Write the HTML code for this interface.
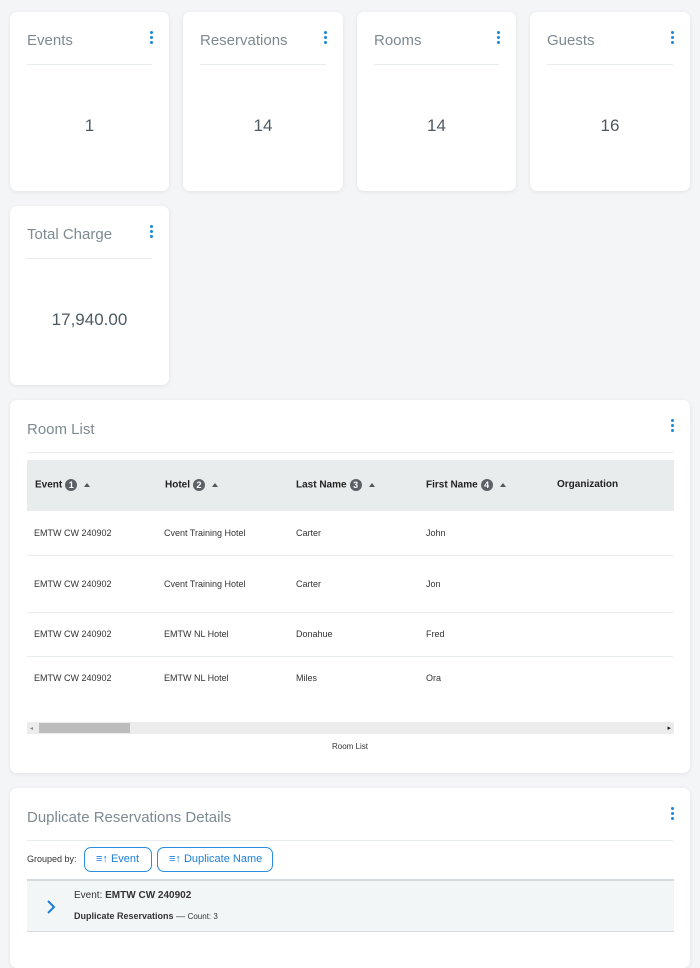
<!DOCTYPE html>
<html><head><meta charset="utf-8"><style>
*{box-sizing:border-box;margin:0;padding:0}
body{width:700px;height:951px;background:#f4f5f6;font-family:"Liberation Sans",sans-serif;position:relative;overflow:hidden;color:#333}
.card{position:absolute;background:#fff;border-radius:7px;box-shadow:0 1px 4px rgba(0,0,0,.08)}
.t{position:absolute;left:17px;top:20px;font-size:15px;color:#7d8a92}
.ln{position:absolute;left:17px;right:17px;height:1px;background:#e8ebed}
.dots{position:absolute;width:3px}
.dots i{display:block;width:3px;height:3px;border-radius:50%;background:#1a8ad6;margin-bottom:2px}
.n{position:absolute;left:0;right:0;text-align:center;font-size:17px;color:#4d5a63}
.abs{position:absolute;font-size:9px;color:#333}
.th{position:absolute;top:19px;font-size:10px;font-weight:bold;color:#222}
.b{display:inline-block;width:12px;height:12px;border-radius:50%;background:#5b6166;color:#fff;font-size:9px;text-align:center;line-height:12px;vertical-align:middle;margin:0 3px}
.ar{display:inline-block;width:0;height:0;border-left:3px solid transparent;border-right:3px solid transparent;border-bottom:4px solid #555;vertical-align:middle;margin-left:4px}
.btn{position:absolute;top:59px;height:25px;border:1px solid #2a8de0;border-radius:7px;color:#1a7fd8;font-size:11px;line-height:23px;padding-left:11px}
</style></head><body>
<div class="card" style="left:10px;top:12px;width:159px;height:179px"><div class="t">Events</div><div class="dots" style="left:140px;top:19px"><i></i><i></i><i></i></div><div class="ln" style="top:52px"></div><div class="n" style="top:104px">1</div></div>
<div class="card" style="left:183px;top:12px;width:160px;height:179px"><div class="t">Reservations</div><div class="dots" style="left:141px;top:19px"><i></i><i></i><i></i></div><div class="ln" style="top:52px"></div><div class="n" style="top:104px">14</div></div>
<div class="card" style="left:357px;top:12px;width:159px;height:179px"><div class="t">Rooms</div><div class="dots" style="left:140px;top:19px"><i></i><i></i><i></i></div><div class="ln" style="top:52px"></div><div class="n" style="top:104px">14</div></div>
<div class="card" style="left:530px;top:12px;width:160px;height:179px"><div class="t">Guests</div><div class="dots" style="left:141px;top:19px"><i></i><i></i><i></i></div><div class="ln" style="top:52px"></div><div class="n" style="top:104px">16</div></div>
<div class="card" style="left:10px;top:206px;width:159px;height:179px"><div class="t">Total Charge</div><div class="dots" style="left:140px;top:19px"><i></i><i></i><i></i></div><div class="ln" style="top:52px"></div><div class="n" style="top:104px">17,940.00</div></div>

<div class="card" style="left:10px;top:400px;width:680px;height:373px">
<div class="t" style="top:21px">Room List</div><div class="dots" style="left:661px;top:19px"><i></i><i></i><i></i></div><div class="ln" style="top:52px"></div>
<div style="position:absolute;left:17px;top:60px;width:647px;height:51px;background:#e9ecec">
<div class="th" style="left:8px">Event<span class="b">1</span><span class="ar"></span></div>
<div class="th" style="left:138px">Hotel<span class="b">2</span><span class="ar"></span></div>
<div class="th" style="left:269px">Last Name<span class="b">3</span><span class="ar"></span></div>
<div class="th" style="left:399px">First Name<span class="b">4</span><span class="ar"></span></div>
<div class="th" style="left:530px">Organization</div>
</div>
<div class="abs" style="left:24px;top:128px">EMTW CW 240902</div><div class="abs" style="left:154px;top:128px">Cvent Training Hotel</div><div class="abs" style="left:286px;top:128px">Carter</div><div class="abs" style="left:416px;top:128px">John</div>
<div class="ln" style="top:155px"></div>
<div class="abs" style="left:24px;top:179px">EMTW CW 240902</div><div class="abs" style="left:154px;top:179px">Cvent Training Hotel</div><div class="abs" style="left:286px;top:179px">Carter</div><div class="abs" style="left:416px;top:179px">Jon</div>
<div class="ln" style="top:212px"></div>
<div class="abs" style="left:24px;top:229px">EMTW CW 240902</div><div class="abs" style="left:154px;top:229px">EMTW NL Hotel</div><div class="abs" style="left:286px;top:229px">Donahue</div><div class="abs" style="left:416px;top:229px">Fred</div>
<div class="ln" style="top:256px"></div>
<div class="abs" style="left:24px;top:273px">EMTW CW 240902</div><div class="abs" style="left:154px;top:273px">EMTW NL Hotel</div><div class="abs" style="left:286px;top:273px">Miles</div><div class="abs" style="left:416px;top:273px">Ora</div>
<div style="position:absolute;left:17px;top:322px;width:647px;height:12px;background:#ececec"><div style="position:absolute;left:12px;top:1px;width:91px;height:10px;background:#bdbdbd"></div><div style="position:absolute;left:3px;top:3px;font-size:6px;color:#888">◂</div><div style="position:absolute;right:3px;top:2px;font-size:7px;color:#222">▸</div></div>
<div class="abs" style="left:0;right:0;text-align:center;top:342px;font-size:8px">Room List</div>
</div>

<div class="card" style="left:10px;top:788px;width:680px;height:180px">
<div class="t" style="top:21px">Duplicate Reservations Details</div><div class="dots" style="left:661px;top:19px"><i></i><i></i><i></i></div><div class="ln" style="top:52px"></div>
<div class="abs" style="left:17px;top:66px;font-size:9px">Grouped by:</div>
<div class="btn" style="left:74px;width:68px">≡↑ Event</div>
<div class="btn" style="left:147px;width:116px">≡↑ Duplicate Name</div>
<div style="position:absolute;left:17px;top:91px;width:647px;height:53px;background:#f3f6f7;border-top:2px solid #d5dadc;border-bottom:1px solid #d5dadc">
<svg style="position:absolute;left:19px;top:19px" width="10" height="14"><path d="M2 1 L8 7 L2 13" stroke="#1a7fd8" stroke-width="2" fill="none"/></svg>
<div class="abs" style="left:47px;top:9px;font-size:10px">Event: <b>EMTW CW 240902</b></div>
<div class="abs" style="left:47px;top:30px;font-size:9px"><b>Duplicate Reservations</b> — <span style="font-size:8px">Count: 3</span></div>
</div>
</div>
</body></html>
